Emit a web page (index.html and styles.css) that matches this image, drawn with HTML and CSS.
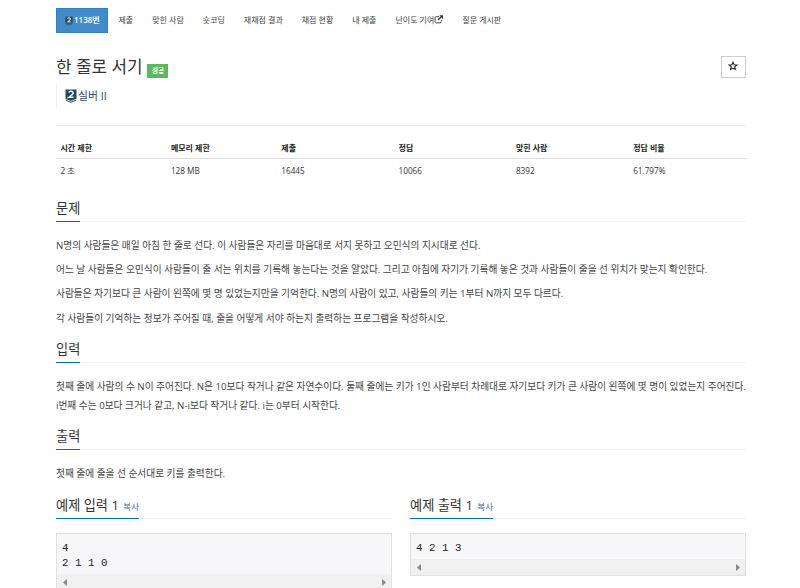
FILE: index.html
```html
<!DOCTYPE html>
<html lang="ko">
<head>
<meta charset="utf-8">
<title>1138번: 한 줄로 서기</title>
<link rel="stylesheet" href="styles.css">
</head>
<body>
<svg class="defs" width="0" height="0" aria-hidden="true">
  <symbol id="tier" viewBox="0 0 12 14">
    <path d="M0.5 0.5h11v9.2L6 12 0.5 9.7z" fill="#2b4863"/>
    <path d="M0.8 11.1L6 13.4l5.200-2.300" fill="none" stroke="#2b4863" stroke-width="1"/>
    <path d="M3.800 3.500Q4 2.300 6 2.300T8.200 4Q8.200 5.200 4 8.300H8.500" fill="none" stroke="#fff" stroke-width="1.500"/>
  </symbol>
</svg>
<main class="container">
  <nav class="menu">
    <a class="item active"><svg class="tier-small"><use href="#tier"/></svg>1138번</a>
    <a class="item">제출</a>
    <a class="item">맞힌 사람</a>
    <a class="item">숏코딩</a>
    <a class="item">재채점 결과</a>
    <a class="item">채점 현황</a>
    <a class="item">내 제출</a>
    <a class="item">난이도 기여<svg class="external" viewBox="0 0 16 16"><path d="M9 3H4Q2 3 2 5v7q0 2 2 2h7q2 0 2-2V9" fill="none" stroke="#333" stroke-width="1.600"/><path d="M7 9l6-6" stroke="#333" stroke-width="2.400"/><path d="M9.500 0.500H16V7z" fill="#333"/></svg></a>
    <a class="item">질문 게시판</a>
  </nav>
  <header class="title-row">
    <div class="title-line">
      <h1>한 줄로 서기</h1>
      <span class="label">성공</span>
    </div>
    <button class="star" aria-label="즐겨찾기"><svg viewBox="0 0 16 16"><path d="M8 2l1.700 4.100 4.400.3-3.400 2.800 1.100 4.300L8 11.200l-3.800 2.300 1.100-4.300L1.900 6.400l4.400-.3z" fill="none" stroke="#222" stroke-width="1.700"/></svg></button>
  </header>
  <div class="tier-line"><svg class="tier-icon"><use href="#tier"/></svg>실버 II</div>
  <table class="info">
    <thead><tr><th>시간 제한</th><th>메모리 제한</th><th>제출</th><th>정답</th><th>맞힌 사람</th><th>정답 비율</th></tr></thead>
    <tbody><tr><td>2 초</td><td>128 MB</td><td>16445</td><td>10066</td><td>8392</td><td>61.797%</td></tr></tbody>
  </table>
  <section>
    <div class="headline"><h2>문제</h2></div>
    <p>N명의 사람들은 매일 아침 한 줄로 선다. 이 사람들은 자리를 마음대로 서지 못하고 오민식의 지시대로 선다.</p>
    <p>어느 날 사람들은 오민식이 사람들이 줄 서는 위치를 기록해 놓는다는 것을 알았다. 그리고 아침에 자기가 기록해 놓은 것과 사람들이 줄을 선 위치가 맞는지 확인한다.</p>
    <p>사람들은 자기보다 큰 사람이 왼쪽에 몇 명 있었는지만을 기억한다. N명의 사람이 있고, 사람들의 키는 1부터 N까지 모두 다르다.</p>
    <p>각 사람들이 기억하는 정보가 주어질 때, 줄을 어떻게 서야 하는지 출력하는 프로그램을 작성하시오.</p>
  </section>
  <section>
    <div class="headline"><h2>입력</h2></div>
    <p>첫째 줄에 사람의 수 N이 주어진다. N은 10보다 작거나 같은 자연수이다. 둘째 줄에는 키가 1인 사람부터 차례대로 자기보다 키가 큰 사람이 왼쪽에 몇 명이 있었는지 주어진다.<br>i번째 수는 0보다 크거나 같고, N-i보다 작거나 같다. i는 0부터 시작한다.</p>
  </section>
  <section>
    <div class="headline"><h2>출력</h2></div>
    <p>첫째 줄에 줄을 선 순서대로 키를 출력한다.</p>
  </section>
  <div class="samples">
    <section>
      <div class="headline"><h2>예제 입력 1 <a class="copy">복사</a></h2></div>
      <div class="sample"><pre>4
2 1 1 0</pre><div class="scrollbar"><i class="left"></i><i class="right"></i></div></div>
    </section>
    <section>
      <div class="headline"><h2>예제 출력 1 <a class="copy">복사</a></h2></div>
      <div class="sample"><pre>4 2 1 3</pre><div class="scrollbar"><i class="left"></i><i class="right"></i></div></div>
    </section>
  </div>
</main>
</body>
</html>
```
FILE: styles.css
```css
* { box-sizing: border-box; }
html { overflow: hidden; }
body {
  margin: 0;
  height: 588px;
  overflow: hidden;
  background: #fff;
  color: #333;
  font-family: "Open Sans", "Noto Sans CJK KR", sans-serif;
  font-size: 9.7px;
}
.defs { position: absolute; }
.container { width: 690px; margin-left: 56px; padding-top: 8px; }
.menu { display: flex; height: 25px; font-size: 8px; white-space: nowrap; }
.item { display: flex; align-items: center; padding: 0 9.5px 2px; color: #444; }
.item.active { width: 52px; margin-right: 1px; padding: 0 0 2px 8px; background: #428bca; border: 1px solid #357ebd; color: #fff; font-weight: 600; }
.tier-small { width: 8px; height: 10px; margin: 2px 1px 0 0; }
.external { width: 9px; height: 9px; margin-left: 0; }
.title-row { display: flex; justify-content: space-between; height: 34px; margin-top: 17px; }
.title-line { display: flex; }
h1 { margin: 0; font-size: 16.9px; line-height: 33px; font-weight: 400; color: #333; white-space: nowrap; }
.label { width: 21px; height: 14px; margin: 14px 0 0 5px; background: #5cb85c; color: #fff; font-size: 6.8px; font-weight: 700; line-height: 14px; text-align: center; white-space: nowrap; }
.star { width: 25px; height: 22px; margin-top: 6px; padding: 0 1px 2px 0; display: flex; align-items: center; justify-content: center; border: 1px solid #ccc; background: #fff; }
.star svg { width: 10px; height: 10px; }
.tier-line { display: flex; align-items: center; height: 24px; padding: 0 0 3px 8px; border-left: 1px solid #eee; font-size: 10.8px; color: #2b4863; }
.tier-icon { width: 12px; height: 14px; margin: 3px 1px 0 0; }
.info { width: 100%; margin-top: 17px; border-top: 1px solid #eee; padding-top: 11px; border-collapse: separate; border-spacing: 0; table-layout: fixed; font-size: 8px; }
.info th, .info td { width: 17%; padding: 0 4.5px; text-align: left; height: 22px; line-height: 21px; white-space: nowrap; }
.info th:nth-child(-n+2) { width: 16%; }
.info th { border-bottom: 1px solid #ddd; font-weight: 700; color: #222; }
.info td { font-size: 8.200px; }
section { min-width: 0; }
.headline { display: flex; height: 24px; margin: 0 0 15px; border-bottom: 1px solid #f3f3f3; }
.info + section { margin-top: 17px; }
h2 { margin: 0; height: 24px; border-bottom: 1px solid #0070a8; font-size: 13.2px; line-height: 20px; font-weight: 400; color: #333; white-space: nowrap; }
p { margin: 0 0 6px; line-height: 18.2px; white-space: nowrap; color: #444; }
section + section { padding-top: 5.5px; }
.copy { margin-left: 1px; font-size: 8.500px; color: #4765a0; }
.samples { display: flex; gap: 18px; padding-top: 6px; }
.samples section { flex: 1; padding-top: 0; }
.samples .headline { margin-bottom: 14px; }
.sample { border: 1px solid #e1e1e4; background: #f7f7f9; }
pre { margin: 0; padding: 7px 5px 3px; font-family: "Liberation Mono", monospace; font-size: 10.800px; line-height: 15px; color: #222; }
.scrollbar { display: flex; align-items: center; justify-content: space-between; height: 16px; padding: 0 5px 0 6px; background: #f0f0f0; }
.scrollbar i { width: 4px; height: 7px; background: #888; }
.left { clip-path: polygon(100% 0, 0 50%, 100% 100%); }
.right { clip-path: polygon(0 0, 100% 50%, 0 100%); }
```
